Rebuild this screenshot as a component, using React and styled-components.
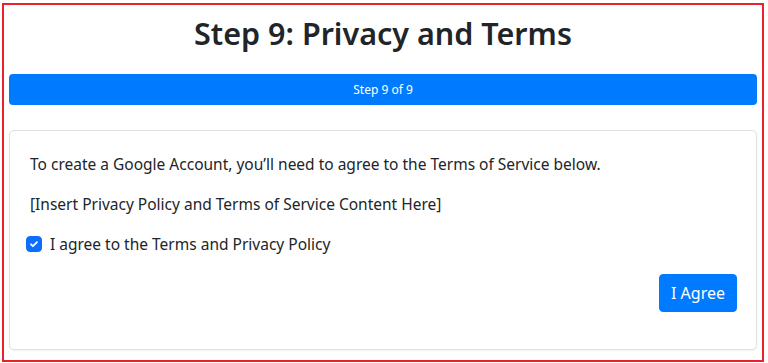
import React, { useState } from "react";
import styled, { createGlobalStyle } from "styled-components";

const GlobalStyle = createGlobalStyle`
  html, body {
    margin: 0;
    padding: 0;
    background: #fff;
  }
  body {
    font-family: "Noto Sans", "Open Sans", sans-serif;
    color: #212529;
  }
`;

const Frame = styled.div`
  margin: 3px 4px 2px 2px;
  border: 2px solid #e8212b;
  padding: 0 5px 10px 5px;
  box-sizing: border-box;
`;

const Title = styled.h1`
  margin: 0;
  padding: 9px 0 22px;
  text-align: center;
  font-size: 30.5px;
  font-weight: 600;
  line-height: 38px;
`;

const Progress = styled.div`
  height: 31px;
  border-radius: 4px;
  background: #e9ecef;
  overflow: hidden;
  display: flex;
`;

const ProgressFill = styled.div`
  background: #007bff;
  color: #fff;
  font-size: 12px;
  display: flex;
  align-items: center;
  justify-content: center;
`;

const Card = styled.div`
  margin-top: 25px;
  border: 1px solid rgba(0, 0, 0, 0.125);
  border-radius: 5px;
  box-shadow: 0 1px 2px rgba(0, 0, 0, 0.05);
  padding: 21px 19px 37px 20px;
`;

const Text = styled.p`
  margin: 0 0 16px;
  font-size: 15.5px;
  line-height: 24px;
`;

const CheckRow = styled.label`
  display: flex;
  align-items: center;
  gap: 8px;
  margin-left: -4px;
  margin-bottom: 18px;
  font-size: 15.5px;
  line-height: 24px;
  cursor: pointer;
`;

const Box = styled.span`
  width: 16px;
  height: 16px;
  border-radius: 4px;
  box-sizing: border-box;
  display: inline-flex;
  align-items: center;
  justify-content: center;
  background: ${(p) => (p.$on ? "#0d6efd" : "#fff")};
  border: 1px solid ${(p) => (p.$on ? "#0d6efd" : "#adb5bd")};
`;

const Actions = styled.div`
  display: flex;
  justify-content: flex-end;
`;

const Button = styled.button`
  font-family: "Noto Sans", "Open Sans", sans-serif;
  font-size: 16px;
  line-height: 24px;
  white-space: nowrap;
  padding: 6px 11px;
  height: 38px;
  border: 1px solid #007bff;
  border-radius: 4px;
  background: #007bff;
  color: #fff;
  cursor: pointer;
`;

export default function App() {
  const [agreed, setAgreed] = useState(true);
  return (
    <>
      <GlobalStyle />
      <Frame>
        <Title>Step 9: Privacy and Terms</Title>
        <Progress>
          <ProgressFill style={{ width: "100%" }}>Step 9 of 9</ProgressFill>
        </Progress>
        <Card>
          <Text>
            To create a Google Account, you’ll need to agree to the Terms of
            Service below.
          </Text>
          <Text>[Insert Privacy Policy and Terms of Service Content Here]</Text>
          <CheckRow onClick={() => setAgreed(!agreed)}>
            <Box $on={agreed}>
              {agreed && (
                <svg width="12" height="12" viewBox="0 0 20 20">
                  <path
                    d="M5 10.5l3.2 3.2L15 7"
                    fill="none"
                    stroke="#fff"
                    strokeWidth="3"
                    strokeLinecap="round"
                    strokeLinejoin="round"
                  />
                </svg>
              )}
            </Box>
            I agree to the Terms and Privacy Policy
          </CheckRow>
          <Actions>
            <Button>I Agree</Button>
          </Actions>
        </Card>
      </Frame>
    </>
  );
}
